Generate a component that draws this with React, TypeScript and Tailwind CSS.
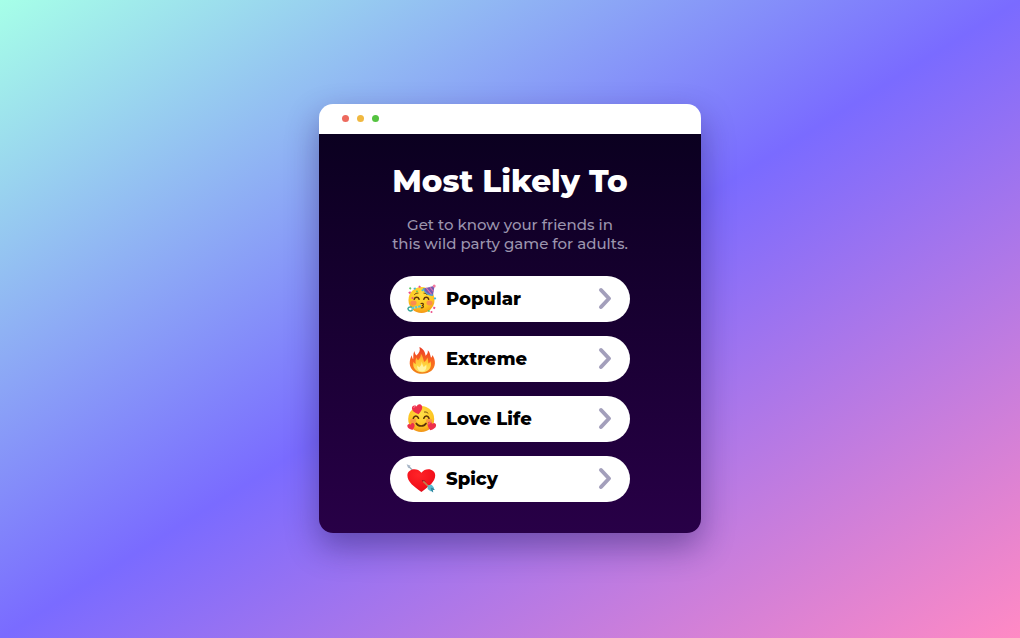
import type { ReactNode } from "react";

const PartyFace = () => (
  <svg viewBox="0 0 32 32" className="size-8" aria-hidden="true">
    <defs>
      <radialGradient id="party-skin" cx="0.5" cy="0.3" r="0.75">
        <stop offset="0" stopColor="#ffdf3f" />
        <stop offset="0.65" stopColor="#fdc51f" />
        <stop offset="1" stopColor="#f28a12" />
      </radialGradient>
    </defs>
    <circle cx="15.5" cy="17" r="13" fill="url(#party-skin)" />
    <ellipse cx="7.5" cy="20" rx="3" ry="2.4" fill="#f9785e" opacity="0.75" />
    <ellipse cx="23.5" cy="20" rx="3" ry="2.4" fill="#f9785e" opacity="0.75" />
    <g fill="none" stroke="#5b3209" strokeWidth="1.5" strokeLinecap="round">
      <path d="M8.2 16.2c.9-2.6 4-2.6 4.9 0M17.8 16.2c.9-2.6 4-2.6 4.9 0" />
      <path d="M8.5 11.5c.9-1 2.2-1.5 3.5-1.4M18 10.2c1.4 0 2.5.5 3.3 1.5" strokeWidth="0.9" />
      <path d="M15 20.5c3-.6 3.2 1.8.9 2 2.2.2 2 2.6-.7 2.3" strokeWidth="1.1" />
    </g>
    <path d="M14.8 22.3 5.5 24.2l.3 2.4 9.3-2.5z" fill="#55c7d8" />
    <path d="M5.8 24.1c-3-.7-4.5 1-3.5 2.6s3.5 1.6 4.2-.1" fill="none" stroke="#38a99b" strokeWidth="1.5" />
    <path d="m8.5 23.7.4 2.1M11.5 23l.4 2" stroke="#f5dc62" />
    <path d="M28.6 2.8 17.8 5.4c.9 4 4.2 6.8 9.2 6.8z" fill="#745bb1" />
    <path d="m20.2 4.9 5.8 6.9M23.8 4l3.6 4.4" stroke="#e070aa" strokeWidth="1.1" />
    <path d="M17.5 5.2c.7 4 4.4 7 9.6 7.1" fill="none" stroke="#4f9bd3" strokeWidth="1.4" />
    <circle cx="28.2" cy="3" r="1.5" fill="#f37a9e" />
    <g fill="#ed4f89">
      <path d="m2.3 9.3 2-1 .7 1.8-1.8.9zM13 2.5l1.8.7-.6 1.8-1.9-.7zM27.8 23.5l1.8 1-1 1.7-1.7-1z" />
      <circle cx="6.5" cy="15" r="1" />
      <circle cx="25.5" cy="29" r="1" />
    </g>
    <g fill="#42b9d4">
      <path d="m7.5 5 2-.6.5 1.7-1.9.7zM29 14l1.3 1.5-1.3 1.3-1.4-1.4z" />
      <circle cx="16.5" cy="7.2" r="1" />
    </g>
    <g fill="#57c65b">
      <path d="m4 4 1.5 1.2-1.1 1.5L3 5.6zM22 27l2 .4-.5 1.7-1.8-.6z" />
      <circle cx="11" cy="8.3" r="0.9" />
    </g>
  </svg>
);

const Fire = () => (
  <svg viewBox="0 0 32 32" className="size-8" aria-hidden="true">
    <defs>
      <linearGradient id="fire-outer" x1="0" y1="0" x2="0" y2="1">
        <stop offset="0" stopColor="#e93b25" />
        <stop offset="0.55" stopColor="#fa6720" />
        <stop offset="1" stopColor="#f08517" />
      </linearGradient>
      <linearGradient id="fire-inner" x1="0" y1="0" x2="0" y2="1">
        <stop offset="0" stopColor="#ffa52c" />
        <stop offset="0.6" stopColor="#ffd23d" />
        <stop offset="1" stopColor="#ffe56a" />
      </linearGradient>
    </defs>
    <path
      d="M13.4 4c4.3 2 5.8 5.3 6.2 8.7 1.8-1.3 2.5-3.1 2.2-5.4 2.5 2.3 2.3 5 3.2 7.5.7-.6 1.3-1.5 1.4-2.8 1.7 2.4 2.7 5.7 2.5 8.6-.4 6.2-5.4 10.2-12.4 10.2S4 26.8 3.7 20.4c-.1-3 .8-5.7 2.2-8.1.1 1.8.4 3 1.3 4 .2-2.7-.3-5.6 1.3-8.3.3 2 .7 3.3 1.9 4.4 3-2.3 4.1-5 3-8.4Z"
      fill="url(#fire-outer)"
    />
    <path
      d="M14.8 10.6c2.2 3 2.6 6 3.2 8.4 1.7-.8 2.8-2.4 3.2-4.6 1.2 2 .8 4.2 1.3 6 .9-.4 1.6-1.1 2-2.1 2.1 5.8-2 10.9-8.1 10.9S6 24.6 7.5 18.7c.6 1.1 1.3 1.9 2.3 2.4-.4-2.6-.4-4.6.7-6.9.2 1.5.7 2.4 1.6 3.1 2-1.9 3-4 2.7-6.7Z"
      fill="url(#fire-inner)"
    />
    <path d="M15.6 18.6c.6 2.2 1.2 3.8 2 5.3 1.2-.5 2-1.3 2.6-2.5 1 4-1 7-4 7-3.2 0-5.6-2.3-4.8-5.8.6.9 1.3 1.4 2 1.7 1.6-1.4 2.5-3.3 2.2-5.7Z" fill="#fff3a3" />
  </svg>
);

const LoveFace = () => (
  <svg viewBox="0 0 32 32" className="size-8" aria-hidden="true">
    <defs>
      <radialGradient id="love-skin" cx="0.5" cy="0.3" r="0.75">
        <stop offset="0" stopColor="#ffe04a" />
        <stop offset="0.65" stopColor="#fdc420" />
        <stop offset="1" stopColor="#ee8615" />
      </radialGradient>
      <path id="love-heart" d="M0 5C-3.2 2.8-5 .8-4.6-1.4-4.2-3.9-1.2-4.4 0-2 1.2-4.4 4.2-3.9 4.6-1.4 5 .8 3.2 2.8 0 5Z" />
    </defs>
    <circle cx="15.2" cy="16" r="13" fill="url(#love-skin)" />
    <ellipse cx="7.2" cy="18" rx="3" ry="2.4" fill="#f77953" opacity="0.6" />
    <ellipse cx="23" cy="18" rx="3" ry="2.4" fill="#f77953" opacity="0.6" />
    <g fill="none" stroke="#5b3209" strokeLinecap="round">
      <path d="M7.3 15.2c1-3 4.2-3 5.2 0M17.8 15.2c1-3 4.2-3 5.2 0" strokeWidth="1.6" />
      <path d="M10.3 20.5c2.1 3.3 7.6 3.3 9.7 0" strokeWidth="1.7" />
      <path d="M18.5 9c1.4-.2 2.5.2 3.5 1.2" strokeWidth="0.9" />
    </g>
    <g fill="#ed304b">
      <use href="#love-heart" transform="translate(11.3 5.8) rotate(-13) scale(1.12)" />
      <use href="#love-heart" transform="translate(5.2 23.3) rotate(-18) scale(.8)" />
      <use href="#love-heart" transform="translate(25.6 22.7) rotate(16) scale(.93)" />
    </g>
    <path d="M7.9 4.6c0-1 .6-1.6 1.5-1.7M22.8 21c0-.8.6-1.4 1.4-1.4" fill="none" stroke="#ff899a" strokeLinecap="round" />
  </svg>
);

const ArrowHeart = () => (
  <svg viewBox="0 0 32 32" className="size-8" aria-hidden="true">
    <defs>
      <radialGradient id="arrow-heart" cx="0.4" cy="0.25" r="0.8">
        <stop offset="0" stopColor="#ff2428" />
        <stop offset="0.7" stopColor="#f3101b" />
        <stop offset="1" stopColor="#d8101f" />
      </radialGradient>
    </defs>
    <path d="m2.5 3.3 5 5" stroke="#9ba6b5" strokeWidth="1.3" />
    <path d="m.6 1.2 4.1 1.5-2.4 2.6z" fill="#a9b7c8" />
    <path d="M15.4 29C8 23.5 1.4 18.8 1.4 12.4c0-6.6 9.6-8.6 14-2.7 4.4-5.9 13.8-3.9 13.8 2.7 0 6.4-6.5 11.1-13.8 16.6Z" fill="url(#arrow-heart)" />
    <path d="M16 17.8c1.5-.2 2.5.2 3.3 1.1" fill="none" stroke="#a51b27" strokeWidth="1.4" />
    <path d="m17.3 18.4 9 8.7" stroke="#c17f50" strokeWidth="1.6" />
    <path d="m21.8 22.2 3.9-.4 2.4 3-2.8.5zM21.8 22.4l-.2 3.5 3.2 2.6.6-3z" fill="#58bdd4" />
    <path d="m24.7 24.8 2.8.3 1.3 1.9-2.2-.1zM24.8 25l.3 2.9 2.1 1.6-.2-2.3z" fill="#318ba5" />
  </svg>
);

const CATEGORIES: { label: string; icon: ReactNode }[] = [
  { label: "Popular", icon: <PartyFace /> },
  { label: "Extreme", icon: <Fire /> },
  { label: "Love Life", icon: <LoveFace /> },
  { label: "Spicy", icon: <ArrowHeart /> },
];

const App = () => {
  return (
    <div className="flex min-h-screen items-center justify-center bg-linear-to-br/srgb from-[#a6ffe8] via-[#7a6bff] to-[#ff8ac4] px-4 pb-0.5 font-['Montserrat','Inter',sans-serif]">
      <main className="w-full max-w-[382px] overflow-hidden rounded-[14px] shadow-[0_14px_32px_rgba(30,20,80,0.42)]">
        <div className="flex h-[30px] items-center gap-2 bg-white px-[23px]">
          <span className="size-[7px] rounded-full bg-[#ed6a5e]" />
          <span className="size-[7px] rounded-full bg-[#f0b840]" />
          <span className="size-[7px] rounded-full bg-[#55c340]" />
        </div>

        <div className="flex flex-col items-center bg-linear-to-b from-[#0b0020] to-[#280047] pt-[29px] pb-[31px]">
          <h1 className="text-[31px] leading-9 font-extrabold text-white">Most Likely To</h1>
          <p className="mt-4 text-center text-[15px] leading-[19px] font-medium text-[#9c95ae]">
            Get to know your friends in
            <br />
            this wild party game for adults.
          </p>

          <div className="mt-[23px] flex w-60 flex-col gap-3.5">
            {CATEGORIES.map((category) => (
              <button
                key={category.label}
                type="button"
                className="flex h-[46px] w-full items-center rounded-full bg-white px-4 text-left text-black"
              >
                {category.icon}
                <span className="ml-2 flex-1 text-lg font-extrabold">{category.label}</span>
                <svg viewBox="0 0 16 24" className="h-6 w-4" fill="none" stroke="#a39fbb" strokeWidth="4" strokeLinecap="round" strokeLinejoin="round" aria-hidden="true">
                  <path d="m3 3 8 8.5L3 20" />
                </svg>
              </button>
            ))}
          </div>
        </div>
      </main>
    </div>
  );
};

export default App;
